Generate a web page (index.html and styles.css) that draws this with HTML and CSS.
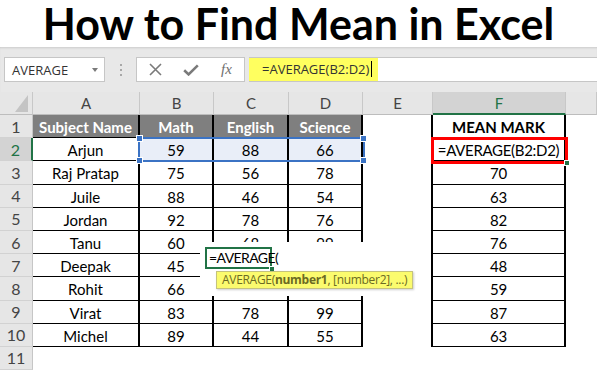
FILE: index.html
```html
<!DOCTYPE html>
<html lang="en">
<head>
    <meta charset="UTF-8">
    <meta name="viewport" content="width=device-width, initial-scale=1.0">
    <title>How to Find Mean in Excel</title>
    <link rel="stylesheet" href="styles.css">
</head>
<body>
<h1 class="title">How to Find Mean in Excel</h1>

<div class="toolbar">
    <div class="name-box">
        <span>AVERAGE</span>
        <span class="caret"></span>
    </div>
    <div class="grip"><i></i><i></i><i></i></div>
    <div class="fx-buttons">
        <svg class="btn-x" width="13" height="13" viewBox="0 0 13 13"><path d="M1 1L12 12M12 1L1 12" stroke="#7a7a7a" stroke-width="1.6"/></svg>
        <svg class="btn-ok" width="16" height="12" viewBox="0 0 16 12"><path d="M1.2 6.2L5.6 10.4L14.8 1.4" fill="none" stroke="#7a7a7a" stroke-width="2.6"/></svg>
        <span class="fx">fx</span>
    </div>
    <div class="formula">
        <span class="formula-text">=AVERAGE(B2:D2)<span class="cursor"></span></span>
    </div>
</div>

<div class="sheet">
    <div class="cells" id="cells"></div>
    <div class="marks">
        <div class="range">
            <i class="handle tl"></i>
            <i class="handle tr"></i>
            <i class="handle bl"></i>
            <i class="handle br"></i>
        </div>
        <div class="active"><i class="fill-handle"></i></div>
        <div class="editor">
            <div class="edit-box">=AVERAGE(<i class="fill-handle"></i></div>
            <div class="tip">AVERAGE(<b>number1</b>, [number2], ...)</div>
        </div>
    </div>
</div>

<script>
    const sheet = document.getElementById('cells');
    const letters = ['A', 'B', 'C', 'D', 'E', 'F', ''];

    // name, math, english, science, mean
    // (C7:D8 sit under the formula editor, so they stay blank)
    const rows = [
        ['Subject Name', 'Math', 'English', 'Science', 'MEAN MARK'],
        ['Arjun', 59, 88, 66, '=AVERAGE(B2:D2)'],
        ['Raj Pratap', 75, 56, 78, 70],
        ['Juile', 88, 46, 54, 63],
        ['Jordan', 92, 78, 76, 82],
        ['Tanu', 60, 68, 99, 76],
        ['Deepak', 45, '', '', 48],
        ['Rohit', 66, '', '', 59],
        ['Virat', 83, 78, 99, 87],
        ['Michel', 89, 44, 55, 63]
    ];

    function cell(text, cls) {
        const el = document.createElement('div');
        el.className = cls;
        el.textContent = text;
        sheet.appendChild(el);
    }

    cell('', 'corner');
    letters.forEach(l => cell(l, l === 'F' ? 'col on' : 'col'));

    for (let r = 1; r <= 11; r++) {
        cell(r, r === 2 ? 'row on' : 'row');
        const data = rows[r - 1];
        if (!data) {
            for (let c = 0; c < 7; c++) cell('', 'c');
            continue;
        }
        const head = r === 1 ? ' head' : '';
        const sel = r === 2 ? ' sel' : '';
        cell(data[0], 'c t' + head);
        cell(data[1], 'c t' + head + sel);
        cell(data[2], 'c t' + head + sel);
        cell(data[3], 'c t' + head + sel);
        cell('', 'c e');
        cell(data[4], 'c t f' + (r === 1 ? ' bold' : ''));
        cell('', 'c');
    }
</script>
</body>
</html>
```

FILE: styles.css
```css
html, body {
    overflow: hidden;
}
body {
    margin: 0;
    width: 597px;
    height: 370px;
    background: #fff;
    font-family: Lato, "Liberation Sans", sans-serif;
}
.title {
    margin: 0;
    height: 47px;
    line-height: 47px;
    font-size: 43px;
    font-weight: 700;
    text-align: center;
    color: #000;
}

/* formula bar */
.toolbar {
    display: flex;
    align-items: center;
    height: 45px;
    padding-left: 4px;
    background: #e8e8e8;
    box-shadow: inset 0 2px 3px -2px rgba(0, 0, 0, 0.25);
    font-family: "Open Sans", sans-serif;
    font-size: 13px;
    color: #333;
}
.name-box {
    width: 101px;
    height: 25px;
    box-sizing: border-box;
    display: flex;
    align-items: center;
    justify-content: space-between;
    padding: 0 6px 0 7px;
    background: #fff;
    border: 1px solid #c6c6c6;
}
.caret {
    border-left: 3.5px solid transparent;
    border-right: 3.5px solid transparent;
    border-top: 4px solid #7a7a7a;
}
.grip {
    width: 31px;
    display: flex;
    flex-direction: column;
    align-items: center;
    gap: 3px;
}
.grip i {
    width: 2px;
    height: 2px;
    background: #a8a8a8;
}
.fx-buttons {
    width: 109px;
    height: 25px;
    box-sizing: border-box;
    display: flex;
    align-items: center;
    padding-left: 12px;
    background: #fff;
    border: 1px solid #c6c6c6;
}
.btn-ok {
    margin-left: 21px;
}
.fx {
    margin-left: 22px;
    font-family: "Liberation Serif", serif;
    font-style: italic;
    font-size: 15px;
    color: #6e6e6e;
}
.formula {
    flex: 1;
    height: 25px;
    box-sizing: border-box;
    margin-left: 4px;
    background: #fff;
    border-top: 1px solid #c6c6c6;
    border-bottom: 1px solid #c6c6c6;
}
.formula-text {
    display: inline-block;
    width: 129px;
    height: 100%;
    box-sizing: border-box;
    padding-left: 13px;
    line-height: 23px;
    background: #ffff5f;
    white-space: nowrap;
}
.cursor {
    display: inline-block;
    width: 1px;
    height: 16px;
    margin-left: 2px;
    vertical-align: -3px;
    background: #000;
}

/* grid */
.sheet {
    display: grid;
}
.cells, .marks {
    grid-area: 1 / 1;
    display: grid;
    grid-template-columns: 33px 107px 74px 75px 74px 70px 133px 31px;
    grid-template-rows: 23px repeat(11, 23.2px);
}
.cells > div {
    box-sizing: border-box;
    display: flex;
    align-items: center;
    justify-content: center;
    white-space: nowrap;
    font-size: 15px;
}
.corner {
    position: relative;
    background: #e6e6e6;
    border-right: 1px solid #c8c8c8;
    border-bottom: 1px solid #bdbdbd;
}
.corner::after {
    content: "";
    position: absolute;
    right: 4px;
    bottom: 2px;
    width: 13px;
    height: 17px;
    background: #c4c4c4;
    clip-path: polygon(100% 0, 100% 100%, 0 100%);
}
.col {
    background: #e6e6e6;
    border-right: 1px solid #c8c8c8;
    border-bottom: 1px solid #bdbdbd;
    color: #444;
}
.cells > .row {
    background: #e6e6e6;
    border-right: 1px solid #c6c6c6;
    border-bottom: 1px solid #d2d2d2;
    color: #444;
    font-size: 16px;
}
.col.on, .row.on {
    background: #d3d3d3;
    color: #217346;
}
.col.on {
    border-bottom: 2px solid #217346;
}
.cells > .row.on {
    border-right: 2px solid #217346;
}
.c {
    padding-top: 2px;
    background: #fff;
    color: #000;
}
.t {
    border-bottom: 1px solid #000;
    border-right: 2px solid #000;
}
.e {
    border-right: 2px solid #000;
}
.head {
    background: #7f7f7f;
    color: #fff;
    font-weight: 700;
}
.sel {
    background: #e9eef8;
}
.f {
    letter-spacing: -0.3px;
}
.bold {
    font-weight: 700;
    letter-spacing: 0;
}

/* selection marks over the grid */
.marks {
    position: relative;
    pointer-events: none;
}
.range {
    grid-column: 3 / 6;
    grid-row: 3;
    position: relative;
    margin: -1px -2px -1px -2px;
    border: 2px solid #3b73c4;
}
.handle {
    position: absolute;
    width: 5px;
    height: 5px;
    background: #3b73c4;
    border: 1px solid #fff;
}
.tl { left: -4px; top: -4px; }
.tr { right: -4px; top: -4px; }
.bl { left: -4px; bottom: -4px; }
.br { right: -4px; bottom: -4px; }
.active {
    grid-column: 7;
    grid-row: 3;
    position: relative;
    margin: -1px -2px -3px -2px;
    border: 3px solid #f00;
}
.fill-handle {
    position: absolute;
    right: -5px;
    bottom: -5px;
    width: 4px;
    height: 4px;
    background: #217346;
    border: 1px solid #fff;
}
.editor {
    position: absolute;
    left: 200px;
    top: 150px;
    width: 170px;
    height: 54px;
    background: #fff;
}
.edit-box {
    position: absolute;
    left: 5px;
    top: 5px;
    width: 67px;
    height: 22px;
    box-sizing: border-box;
    padding-left: 2px;
    border: 2px solid #217346;
    font-size: 14px;
    line-height: 18px;
    letter-spacing: -0.6px;
    white-space: nowrap;
}
.tip {
    position: absolute;
    left: 16px;
    top: 29px;
    height: 18px;
    box-sizing: border-box;
    padding: 0 5px;
    background: #fbfb6e;
    border: 1px solid #c5c37c;
    box-shadow: 1px 1px 2px rgba(0, 0, 0, 0.2);
    font-family: "Open Sans", sans-serif;
    font-size: 12px;
    line-height: 16px;
    letter-spacing: -0.3px;
    color: #6b6a23;
    white-space: nowrap;
}
```
